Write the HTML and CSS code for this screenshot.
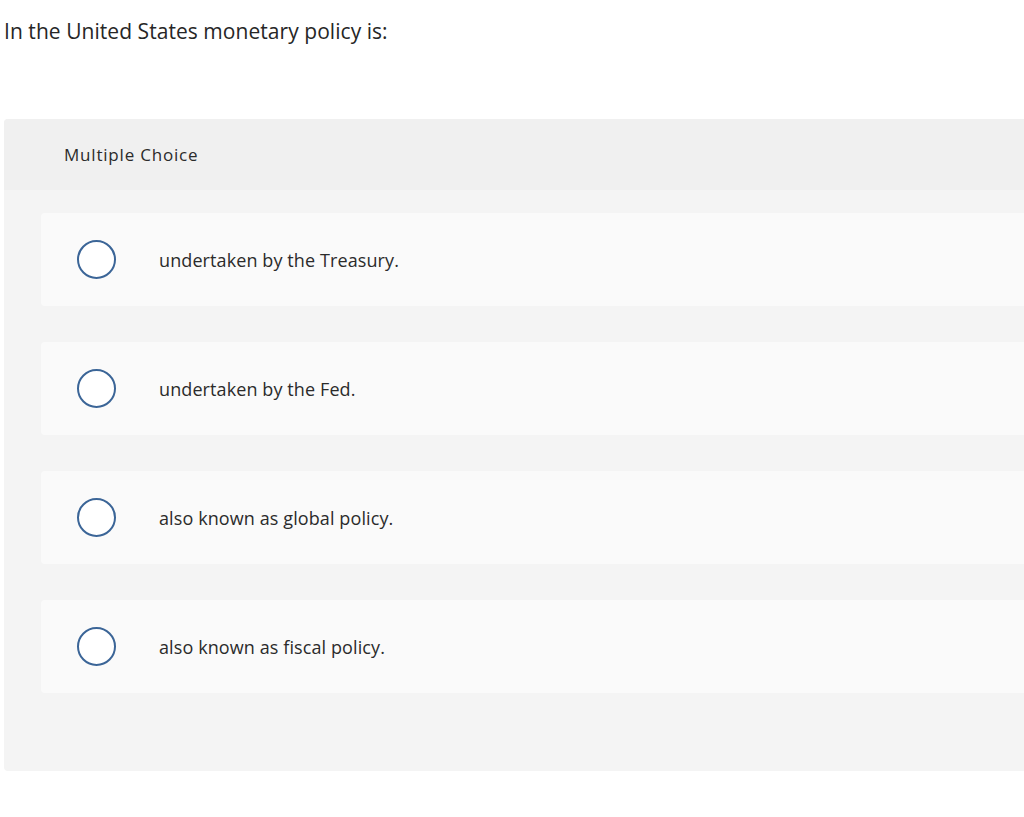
FILE: index.html
```html
<!DOCTYPE html>
<html lang="en">
<head>
<meta charset="utf-8">
<title>Multiple Choice</title>
<link rel="stylesheet" href="styles.css">
</head>
<body>
<p class="question">In the United States monetary policy is:</p>
<section class="panel">
  <header class="panel-head">Multiple Choice</header>
  <div class="panel-body">
    <label class="option"><span class="radio"></span><span class="option-text">undertaken by the Treasury.</span></label>
    <label class="option"><span class="radio"></span><span class="option-text">undertaken by the Fed.</span></label>
    <label class="option"><span class="radio"></span><span class="option-text">also known as global policy.</span></label>
    <label class="option"><span class="radio"></span><span class="option-text">also known as fiscal policy.</span></label>
  </div>
</section>
</body>
</html>
```
FILE: styles.css
```css
html, body {
  margin: 0;
  padding: 0;
  background: #ffffff;
}
body {
  font-family: "Open Sans", "Liberation Sans", sans-serif;
  color: #2b2b2b;
}
.question {
  margin: 0 0 75px 0;
  padding: 18px 0 0 4px;
  font-size: 21px;
  line-height: 26px;
  letter-spacing: 0.05px;
  color: #262626;
}
.panel {
  margin-left: 4px;
  background: #f4f4f4;
  border-radius: 4px 0 0 4px;
  overflow: hidden;
}
.panel-head {
  height: 71px;
  display: flex;
  align-items: center;
  padding-left: 60px;
  background: #f0f0f0;
  font-size: 17px;
  letter-spacing: 0.8px;
  color: #2b2b2b;
}
.panel-body {
  display: flex;
  flex-direction: column;
  gap: 36px;
  padding: 23px 0 78px 37px;
}
.option {
  height: 93px;
  display: flex;
  align-items: center;
  padding-left: 36px;
  background: #fafafa;
  border-radius: 4px 0 0 4px;
}
.radio {
  width: 39px;
  height: 39px;
  box-sizing: border-box;
  border: 2px solid #3b6597;
  border-radius: 50%;
  background: #ffffff;
  flex: none;
}
.option-text {
  margin-left: 43px;
  font-size: 18px;
  letter-spacing: 0.1px;
  color: #2b2b2b;
}
```
